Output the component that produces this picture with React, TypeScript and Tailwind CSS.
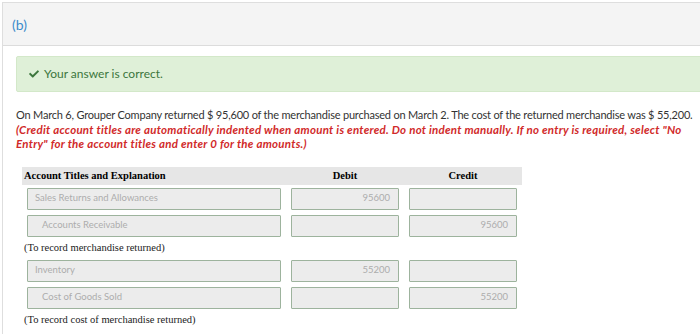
import React from 'react';
import { FaCheck } from 'react-icons/fa';

type Entry = { account: string; indent?: boolean; debit?: string; credit?: string };

const groups: { rows: Entry[]; note: string }[] = [
  {
    rows: [
      { account: 'Sales Returns and Allowances', debit: '95600' },
      { account: 'Accounts Receivable', indent: true, credit: '95600' },
    ],
    note: '(To record merchandise returned)',
  },
  {
    rows: [
      { account: 'Inventory', debit: '55200' },
      { account: 'Cost of Goods Sold', indent: true, credit: '55200' },
    ],
    note: '(To record cost of merchandise returned)',
  },
];

const Field: React.FC<{ value?: string; right?: boolean; indent?: boolean }> = ({ value, right, indent }) => (
  <div
    className={`h-[22px] flex items-center bg-[#ececec] border border-[#9db39d] rounded-[1px] text-[9.5px] text-[#adadad] ${
      right ? 'justify-end pr-[8px]' : indent ? 'pl-[14px]' : 'pl-[7px]'
    }`}
  >
    {value}
  </div>
);

const App: React.FC = () => {
  return (
    <div className="w-[700px] h-[334px] overflow-hidden bg-white pt-[2px] pl-[2px] font-['Lato',sans-serif]">
      <div className="w-[720px] border-l border-t border-[#dedede]">
        {/* Part header */}
        <div className="h-[43px] flex items-center pl-[9px] bg-[#f4f4f4] border-b border-[#dcdcdc]">
          <span className="text-[14px] text-[#3d8ccb]">(b)</span>
        </div>

        <div className="pl-[13px] pt-[10px] pb-6">
          {/* Result banner */}
          <div className="h-[36px] flex items-center gap-[5px] pl-[12px] bg-[#dff0d8] border border-[#d3e8c9] rounded-[2px]">
            <FaCheck size={10} className="text-[#3c763d]" />
            <span className="text-[12px] text-[#3c763d]">Your answer is correct.</span>
          </div>

          {/* Question text */}
          <div className="mt-[16px] w-[684px] leading-[14.5px]">
            <p className="text-[11px] tracking-[-0.2px] text-[#333] whitespace-nowrap">
              On March 6, Grouper Company returned $ 95,600 of the merchandise purchased on March 2. The cost of the returned merchandise was $ 55,200.
            </p>
            <p className="w-[684px] text-[11.5px] tracking-[0.25px] font-bold italic text-[#d12a2a]">
              (Credit account titles are automatically indented when amount is entered. Do not indent manually. If no entry is required, select "No Entry" for the account titles and enter 0 for the amounts.)
            </p>
          </div>

          {/* Journal table */}
          <div className="mt-[15px] ml-[6px] w-[500px] font-['Liberation_Serif',serif]">
            <div className="h-[18px] grid grid-cols-[264px_118px_118px] items-center bg-[#e6e6e6] text-[10.5px] font-bold text-black">
              <div className="pl-[2px]">Account Titles and Explanation</div>
              <div className="text-center">Debit</div>
              <div className="text-center">Credit</div>
            </div>

            {groups.map((g, gi) => (
              <div key={gi}>
                {g.rows.map((r, ri) => (
                  <div key={ri} className="grid grid-cols-[264px_118px_118px] pt-[3px] pb-[2px] font-['Lato',sans-serif]">
                    <div className="px-[5px]">
                      <Field value={r.account} indent={r.indent} />
                    </div>
                    <div className="px-[5px]">
                      <Field value={r.debit} right />
                    </div>
                    <div className="px-[5px]">
                      <Field value={r.credit} right />
                    </div>
                  </div>
                ))}
                <div className="h-[18px] flex items-center pl-[2px] text-[10.5px] text-[#222]">{g.note}</div>
              </div>
            ))}
          </div>
        </div>
      </div>
    </div>
  );
};

export default App;
